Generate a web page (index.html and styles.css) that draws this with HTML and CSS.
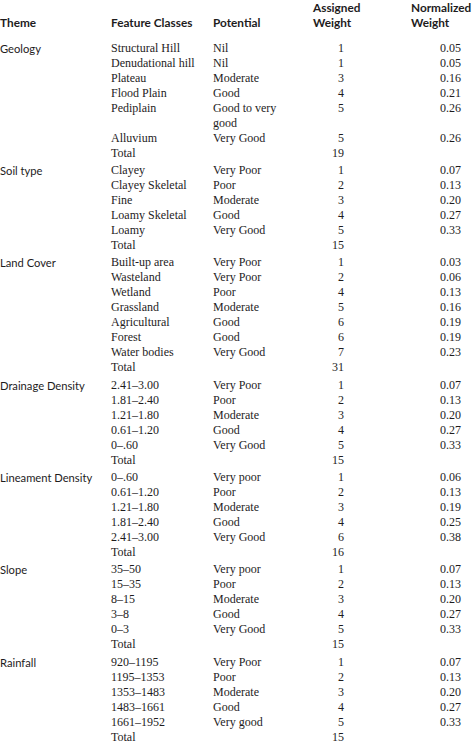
FILE: index.html
```html
<!DOCTYPE html>
<html lang="en">
<head>
<meta charset="utf-8">
<title>Weights table</title>
<link rel="stylesheet" href="styles.css">
</head>
<body>
<div class="table">
  <div class="head">
    <div class="h-theme">Theme</div>
    <div class="h-cols">
      <div>Feature Classes</div>
      <div>Potential</div>
      <div>Assigned<br>Weight</div>
      <div>Normalized<br>Weight</div>
    </div>
  </div>

  <div class="group">
    <div class="theme">Geology</div>
    <div class="rows">
      <div class="row"><div class="feat">Structural Hill</div><div class="pot">Nil</div><div class="asg">1</div><div class="norm">0.05</div></div>
      <div class="row"><div class="feat">Denudational hill</div><div class="pot">Nil</div><div class="asg">1</div><div class="norm">0.05</div></div>
      <div class="row"><div class="feat">Plateau</div><div class="pot">Moderate</div><div class="asg">3</div><div class="norm">0.16</div></div>
      <div class="row"><div class="feat">Flood Plain</div><div class="pot">Good</div><div class="asg">4</div><div class="norm">0.21</div></div>
      <div class="row"><div class="feat">Pediplain</div><div class="pot">Good to very good</div><div class="asg">5</div><div class="norm">0.26</div></div>
      <div class="row"><div class="feat">Alluvium</div><div class="pot">Very Good</div><div class="asg">5</div><div class="norm">0.26</div></div>
      <div class="row"><div class="feat">Total</div><div class="pot"></div><div class="asg">19</div><div class="norm"></div></div>
    </div>
  </div>

  <div class="group">
    <div class="theme">Soil type</div>
    <div class="rows">
      <div class="row"><div class="feat">Clayey</div><div class="pot">Very Poor</div><div class="asg">1</div><div class="norm">0.07</div></div>
      <div class="row"><div class="feat">Clayey Skeletal</div><div class="pot">Poor</div><div class="asg">2</div><div class="norm">0.13</div></div>
      <div class="row"><div class="feat">Fine</div><div class="pot">Moderate</div><div class="asg">3</div><div class="norm">0.20</div></div>
      <div class="row"><div class="feat">Loamy Skeletal</div><div class="pot">Good</div><div class="asg">4</div><div class="norm">0.27</div></div>
      <div class="row"><div class="feat">Loamy</div><div class="pot">Very Good</div><div class="asg">5</div><div class="norm">0.33</div></div>
      <div class="row"><div class="feat">Total</div><div class="pot"></div><div class="asg">15</div><div class="norm"></div></div>
    </div>
  </div>

  <div class="group">
    <div class="theme">Land Cover</div>
    <div class="rows">
      <div class="row"><div class="feat">Built-up area</div><div class="pot">Very Poor</div><div class="asg">1</div><div class="norm">0.03</div></div>
      <div class="row"><div class="feat">Wasteland</div><div class="pot">Very Poor</div><div class="asg">2</div><div class="norm">0.06</div></div>
      <div class="row"><div class="feat">Wetland</div><div class="pot">Poor</div><div class="asg">4</div><div class="norm">0.13</div></div>
      <div class="row"><div class="feat">Grassland</div><div class="pot">Moderate</div><div class="asg">5</div><div class="norm">0.16</div></div>
      <div class="row"><div class="feat">Agricultural</div><div class="pot">Good</div><div class="asg">6</div><div class="norm">0.19</div></div>
      <div class="row"><div class="feat">Forest</div><div class="pot">Good</div><div class="asg">6</div><div class="norm">0.19</div></div>
      <div class="row"><div class="feat">Water bodies</div><div class="pot">Very Good</div><div class="asg">7</div><div class="norm">0.23</div></div>
      <div class="row"><div class="feat">Total</div><div class="pot"></div><div class="asg">31</div><div class="norm"></div></div>
    </div>
  </div>

  <div class="group">
    <div class="theme">Drainage Density</div>
    <div class="rows">
      <div class="row"><div class="feat">2.41–3.00</div><div class="pot">Very Poor</div><div class="asg">1</div><div class="norm">0.07</div></div>
      <div class="row"><div class="feat">1.81–2.40</div><div class="pot">Poor</div><div class="asg">2</div><div class="norm">0.13</div></div>
      <div class="row"><div class="feat">1.21–1.80</div><div class="pot">Moderate</div><div class="asg">3</div><div class="norm">0.20</div></div>
      <div class="row"><div class="feat">0.61–1.20</div><div class="pot">Good</div><div class="asg">4</div><div class="norm">0.27</div></div>
      <div class="row"><div class="feat">0–.60</div><div class="pot">Very Good</div><div class="asg">5</div><div class="norm">0.33</div></div>
      <div class="row"><div class="feat">Total</div><div class="pot"></div><div class="asg">15</div><div class="norm"></div></div>
    </div>
  </div>

  <div class="group">
    <div class="theme">Lineament Density</div>
    <div class="rows">
      <div class="row"><div class="feat">0–.60</div><div class="pot">Very poor</div><div class="asg">1</div><div class="norm">0.06</div></div>
      <div class="row"><div class="feat">0.61–1.20</div><div class="pot">Poor</div><div class="asg">2</div><div class="norm">0.13</div></div>
      <div class="row"><div class="feat">1.21–1.80</div><div class="pot">Moderate</div><div class="asg">3</div><div class="norm">0.19</div></div>
      <div class="row"><div class="feat">1.81–2.40</div><div class="pot">Good</div><div class="asg">4</div><div class="norm">0.25</div></div>
      <div class="row"><div class="feat">2.41–3.00</div><div class="pot">Very Good</div><div class="asg">6</div><div class="norm">0.38</div></div>
      <div class="row"><div class="feat">Total</div><div class="pot"></div><div class="asg">16</div><div class="norm"></div></div>
    </div>
  </div>

  <div class="group">
    <div class="theme">Slope</div>
    <div class="rows">
      <div class="row"><div class="feat">35–50</div><div class="pot">Very poor</div><div class="asg">1</div><div class="norm">0.07</div></div>
      <div class="row"><div class="feat">15–35</div><div class="pot">Poor</div><div class="asg">2</div><div class="norm">0.13</div></div>
      <div class="row"><div class="feat">8–15</div><div class="pot">Moderate</div><div class="asg">3</div><div class="norm">0.20</div></div>
      <div class="row"><div class="feat">3–8</div><div class="pot">Good</div><div class="asg">4</div><div class="norm">0.27</div></div>
      <div class="row"><div class="feat">0–3</div><div class="pot">Very Good</div><div class="asg">5</div><div class="norm">0.33</div></div>
      <div class="row"><div class="feat">Total</div><div class="pot"></div><div class="asg">15</div><div class="norm"></div></div>
    </div>
  </div>

  <div class="group">
    <div class="theme">Rainfall</div>
    <div class="rows">
      <div class="row"><div class="feat">920–1195</div><div class="pot">Very Poor</div><div class="asg">1</div><div class="norm">0.07</div></div>
      <div class="row"><div class="feat">1195–1353</div><div class="pot">Poor</div><div class="asg">2</div><div class="norm">0.13</div></div>
      <div class="row"><div class="feat">1353–1483</div><div class="pot">Moderate</div><div class="asg">3</div><div class="norm">0.20</div></div>
      <div class="row"><div class="feat">1483–1661</div><div class="pot">Good</div><div class="asg">4</div><div class="norm">0.27</div></div>
      <div class="row"><div class="feat">1661–1952</div><div class="pot">Very good</div><div class="asg">5</div><div class="norm">0.33</div></div>
      <div class="row"><div class="feat">Total</div><div class="pot"></div><div class="asg">15</div><div class="norm"></div></div>
    </div>
  </div>
</div>
</body>
</html>
```

FILE: styles.css
```css
html, body {
  margin: 0;
  padding: 0;
  background: #ffffff;
}

body {
  color: #1e1c1d;
  font-family: "Liberation Serif", "Times New Roman", serif;
  font-size: 12px;
  line-height: 15px;
}

.table {
  width: 474px;
  overflow: hidden;
}

.head {
  display: flex;
  align-items: flex-end;
  font-family: Lato, "Open Sans", sans-serif;
  font-weight: 700;
  font-size: 11.8px;
  line-height: 15px;
  margin-bottom: 10.5px;
  white-space: nowrap;
}

.h-theme {
  width: 111px;
  flex: none;
}

.h-cols {
  display: grid;
  grid-template-columns: 102px 100px 98px 63px;
  align-items: end;
}

.group {
  display: flex;
}

.group + .group {
  margin-top: 2.4px;
}

.theme {
  width: 111px;
  flex: none;
  font-family: Lato, "Open Sans", sans-serif;
  font-size: 11.2px;
  line-height: 15px;
  white-space: nowrap;
}

.rows {
  display: flex;
  flex-direction: column;
}

.row {
  display: grid;
  grid-template-columns: 102px 100px 98px 63px;
}

.feat {
  white-space: nowrap;
}

.pot {
  padding-right: 25px;
}

.asg {
  text-align: right;
  padding-right: 67px;
}

.norm {
  text-align: right;
  padding-right: 13px;
}
```
